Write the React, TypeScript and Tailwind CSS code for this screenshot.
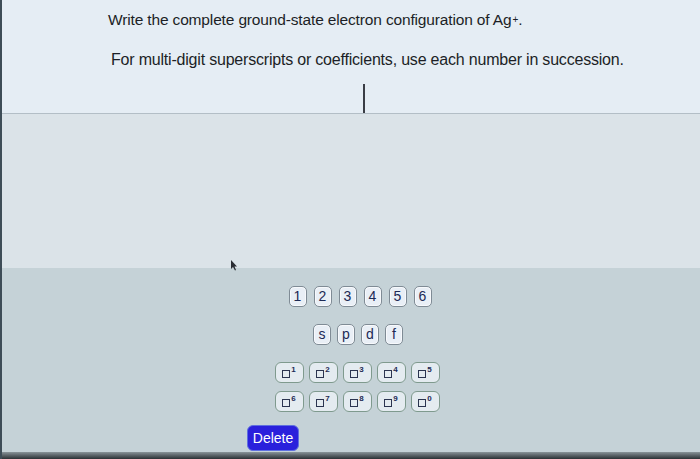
import React from "react";

const font = { fontFamily: '"Liberation Sans", Arial, sans-serif' };

function Key({ children }: { children: React.ReactNode }) {
  return (
    <div className="w-[18px] h-[21px] flex items-center justify-center rounded-[5px] border border-[#7f8b95] bg-[#e9eff6] text-[14px] text-[#1d2a55] shadow-[inset_0_0_0_1px_#f7f9fc]">
      {children}
    </div>
  );
}

function Sup({ n }: { n: string }) {
  return (
    <div className="w-[29px] h-[21px] flex items-center justify-center rounded-[6px] border border-[#7f9a8e] bg-[#e4ebf0] text-[#1d2a55]">
      <span className="w-[8px] h-[8px] border border-[#2b3450] mt-[2px]" />
      <span className="text-[8px] font-bold -mt-[5px] ml-[1px]">{n}</span>
    </div>
  );
}

export default function App() {
  return (
    <div className="w-[700px] h-[459px] overflow-hidden flex flex-col bg-[#c5d2d7] border-l-2 border-[#3e4d57]" style={font}>
      <div className="h-[114px] shrink-0 overflow-hidden bg-[#e5edf4] border-b border-[#b3bec6] flex flex-col pl-[106px]">
        <div className="mt-[11px] text-[15.5px] tracking-[-0.15px] text-[#1c1f26] leading-[18px]">
          Write the complete ground-state electron configuration of Ag
          <sup className="text-[10px] relative -top-[2px] ml-[1px]">+</sup>.
        </div>
        <div className="mt-[22px] ml-[3px] text-[16px] tracking-[-0.2px] text-[#1c1f26] leading-[18px]">
          For multi-digit superscripts or coefficients, use each number in succession.
        </div>
        <div className="shrink-0 ml-[255px] mt-[15px] w-[1.5px] h-[32px] bg-[#3a3d45]" />
      </div>
      <div className="h-[154px] shrink-0 bg-[#dbe3e8] relative">
        <svg className="absolute left-[228px] top-[146px]" width="7" height="11" viewBox="0 0 7 11">
          <path d="M1 0 L1 9 L3 7 L5 10.5 L6 10 L4.5 6.5 L7 6.5 Z" fill="#2a2d33" />
        </svg>
      </div>
      <div className="flex-1 flex flex-col items-center relative">
        <div className="flex gap-[7px] mt-[18px] ml-[18px]">
          {["1", "2", "3", "4", "5", "6"].map((k) => (
            <Key key={k}>{k}</Key>
          ))}
        </div>
        <div className="flex gap-[6px] mt-[17px] ml-[14px]">
          {["s", "p", "d", "f"].map((k) => (
            <Key key={k}>{k}</Key>
          ))}
        </div>
        <div className="flex flex-col gap-[8px] mt-[17px] ml-[12px]">
          <div className="flex gap-[5px]">
            {["1", "2", "3", "4", "5"].map((k) => (
              <Sup key={k} n={k} />
            ))}
          </div>
          <div className="flex gap-[5px]">
            {["6", "7", "8", "9", "0"].map((k) => (
              <Sup key={k} n={k} />
            ))}
          </div>
        </div>
        <div className="self-start ml-[245px] mt-[13px] w-[52px] h-[26px] rounded-[6px] bg-[#2a20dc] border border-[#5f6fe0] text-white text-[14px] flex items-center justify-center">
          Delete
        </div>
        <div className="absolute left-0 right-0 bottom-0 h-[7px] bg-gradient-to-b from-[#8a959a] to-[#2c3236]" />
      </div>
    </div>
  );
}
